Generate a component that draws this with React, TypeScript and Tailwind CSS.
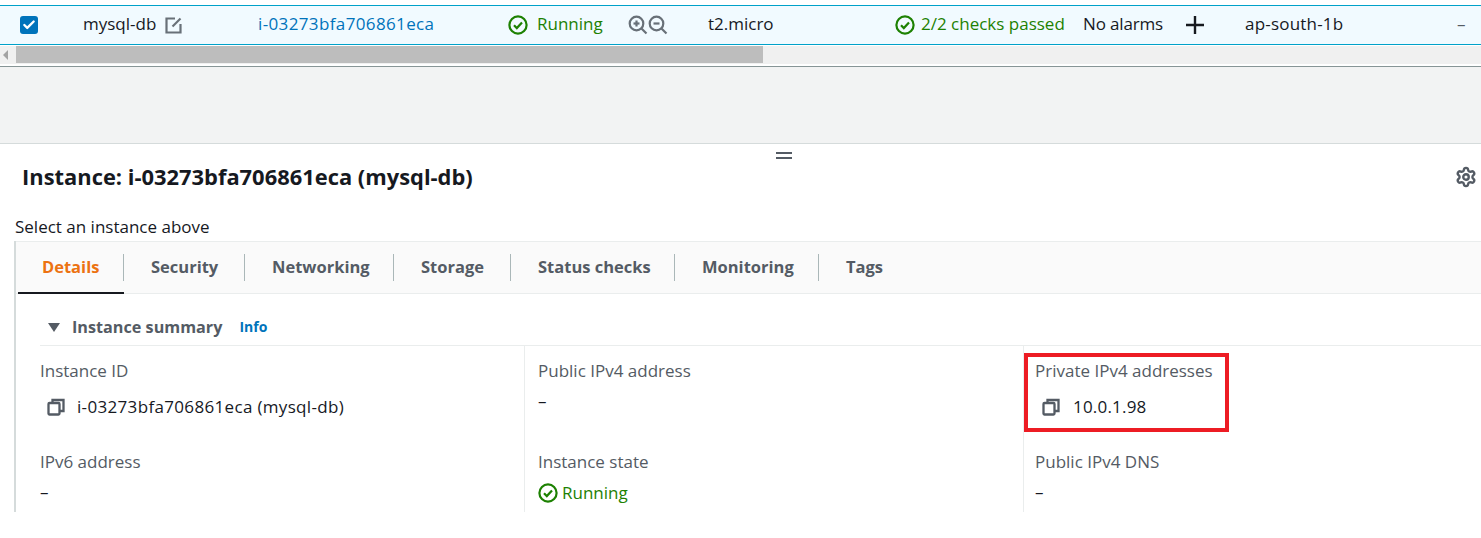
import { Check, Settings } from "lucide-react";

const font = { fontFamily: '"Open Sans", "Liberation Sans", sans-serif' };

function StatusIcon({ size = 20 }: { size?: number }) {
  return (
    <svg width={size} height={size} viewBox="0 0 20 20" fill="none" stroke="#1d8102" strokeWidth="2.2" className="shrink-0">
      <circle cx="10" cy="10" r="8.6" />
      <path d="M6 10.3l2.8 2.8L14 7.4" />
    </svg>
  );
}

function CopyIcon() {
  return (
    <svg width="18" height="18" viewBox="0 0 18 18" fill="none" stroke="#545b64" strokeWidth="2.3" className="shrink-0">
      <rect x="1.5" y="5" width="11" height="11.5" rx="1" />
      <path d="M5.5 5V2h11v11h-4" />
    </svg>
  );
}

function ZoomIcon({ plus }: { plus?: boolean }) {
  return (
    <svg width="20" height="20" viewBox="0 0 20 20" fill="none" stroke="#687078" strokeWidth="2.2">
      <circle cx="8.5" cy="8.5" r="6.8" />
      <path d="M13.5 13.5l5 5" />
      <path d="M5.5 8.5h6" />
      {plus && <path d="M8.5 5.5v6" />}
    </svg>
  );
}

function Tab({ label, width, active, last }: { label: string; width: string; active?: boolean; last?: boolean }) {
  return (
    <div className={`relative flex h-[52px] items-center pb-px ${width} ${active ? "pl-6" : "pl-[27px]"}`}>
      <span className={`whitespace-nowrap text-[16.5px] font-bold ${active ? "text-[#ec7211]" : "text-[#545b64]"}`}>{label}</span>
      {!last && <span className="absolute right-0 top-3 h-[27px] w-px bg-[#aab7b8]" />}
      {active && <span className="absolute bottom-0 left-0 right-0 h-[2px] bg-[#16191f]" />}
    </div>
  );
}

function Label({ children }: { children: string }) {
  return <div className="text-[17px] leading-[22px] text-[#545b64]">{children}</div>;
}

export default function App() {
  return (
    <div style={font} className="h-[538px] w-[1481px] overflow-hidden bg-white text-[17px] text-[#16191f]">
      {/* Selected table row */}
      <div className="mt-[5px] flex h-10 items-center border-y border-[#00a1c9] bg-[#f1faff]">
        <div className="flex w-[83px] pl-5">
          <span className="flex h-[18px] w-[18px] items-center justify-center rounded-[3px] bg-[#0073bb]">
            <Check size={14} strokeWidth={4} className="text-white" />
          </span>
        </div>
        <div className="flex w-[175px] items-center gap-[9px]">
          <span className="pb-[2px]">mysql-db</span>
          <svg width="17" height="17" viewBox="0 0 17 17" fill="none" stroke="#687078" strokeWidth="2.2">
            <path d="M10 1.500H1.500V15.500H15.500V7" />
            <path d="M15.500 1.500L7.500 9.500" />
          </svg>
        </div>
        <div className="w-[250px] pb-[2px] tracking-[0.37px] text-[#0073bb]">i-03273bfa706861eca</div>
        <div className="flex w-[120px] items-center gap-[9px] text-[#1d8102]">
          <StatusIcon />
          <span className="pb-[2px]">Running</span>
        </div>
        <div className="flex w-[80px] items-center">
          <ZoomIcon plus />
          <ZoomIcon />
        </div>
        <div className="w-[187px] pb-[2px]">t2.micro</div>
        <div className="flex w-[188px] items-center gap-[6px] whitespace-nowrap text-[#1d8102]">
          <StatusIcon />
          <span className="pb-[2px]">2/2 checks passed</span>
        </div>
        <div className="w-[103px] whitespace-nowrap pb-[2px] tracking-[-0.15px]">No alarms</div>
        <div className="w-[59px]">
          <svg width="18" height="18" viewBox="0 0 18 18" stroke="#16191f" strokeWidth="2.4">
            <path d="M9 0v18M0 9h18" />
          </svg>
        </div>
        <div className="w-[212px] pb-[2px] tracking-[0.2px]">ap-south-1b</div>
        <div className="pb-[2px] text-[#545b64]">–</div>
      </div>

      {/* Horizontal scrollbar */}
      <div className="mt-px flex h-[18px] bg-[#f0f0f0]">
        <div className="flex w-4 items-center pl-[3px]">
          <span className="h-0 w-0 border-y-[5px] border-r-[5px] border-y-transparent border-r-[#a3a3a3]" />
        </div>
        <div className="h-[17px] w-[747px] bg-[#bdbdbd]" />
      </div>

      {/* Empty table area */}
      <div className="mt-[2px] h-[78px] border-y border-t-[#879596] border-b-[#d5dbdb] bg-[#f2f3f3]" />

      {/* Split panel */}
      <div className="relative">
        <div className="absolute left-[776px] top-[8px] flex flex-col gap-[3px]">
          <span className="h-[2px] w-4 bg-[#545b64]" />
          <span className="h-[2px] w-4 bg-[#545b64]" />
        </div>
        <div className="flex items-center justify-between pl-[22px] pr-[4px] pt-[18px]">
          <h2 className="text-[21.9px] font-bold leading-[30px] text-[#16191f]">Instance: i-03273bfa706861eca (mysql-db)</h2>
          <Settings size={22} strokeWidth={2.6} className="text-[#545b64]" />
        </div>
        <div className="mt-[24px] pl-[15px] leading-[22px] text-[#16191f]">Select an instance above</div>

        {/* Details card */}
        <div className="ml-[14px] mt-[3px] h-[271px] border-l-2 border-[#d5dbdb]">
          <div className="flex h-[53px] border-y border-[#eaeded] bg-[#fafafa] pl-[2px]">
            <Tab label="Details" width="w-[106px]" active />
            <Tab label="Security" width="w-[121px]" />
            <Tab label="Networking" width="w-[149px]" />
            <Tab label="Storage" width="w-[117px]" />
            <Tab label="Status checks" width="w-[164px]" />
            <Tab label="Monitoring" width="w-[144px]" />
            <Tab label="Tags" width="w-[90px]" last />
          </div>
          <div className="pl-6">
            <div className="flex h-[52px] items-center border-b border-[#eaeded] pl-2 pt-4">
              <span className="h-0 w-0 border-x-[6px] border-t-[9px] border-x-transparent border-t-[#545b64]" />
              <span className="ml-3 text-[16.2px] font-bold text-[#545b64]">Instance summary</span>
              <span className="ml-[17px] pb-[2px] text-[14px] font-bold text-[#0073bb]">Info</span>
            </div>
            <div className="grid grid-cols-[484px_499px_1fr]">
              <div className="flex h-[166px] flex-col pt-[14px]">
                <Label>Instance ID</Label>
                <div className="ml-[7px] mt-[12px] flex items-center gap-3 text-[#16191f]">
                  <CopyIcon />
                  <span className="whitespace-nowrap tracking-[0.33px]">i-03273bfa706861eca (mysql-db)</span>
                </div>
                <div className="mt-[31px]"><Label>IPv6 address</Label></div>
                <div className="mt-[8px] leading-[22px] text-[#16191f]">–</div>
              </div>
              <div className="flex h-[166px] flex-col border-l border-[#eaeded] pl-[13px] pt-[14px]">
                <Label>Public IPv4 address</Label>
                <div className="mt-[8px] leading-[22px]">–</div>
                <div className="mt-[39px]"><Label>Instance state</Label></div>
                <div className="mt-[7px] flex items-center gap-[4px] text-[#1d8102]">
                  <StatusIcon />
                  <span>Running</span>
                </div>
              </div>
              <div className="flex h-[166px] flex-col border-l border-[#eaeded] pl-[11px] pt-[14px]">
                <Label>Private IPv4 addresses</Label>
                <div className="ml-[7px] mt-[12px] flex items-center gap-[13px]">
                  <CopyIcon />
                  <span className="tracking-[0.2px]">10.0.1.98</span>
                </div>
                <div className="mt-[31px]"><Label>Public IPv4 DNS</Label></div>
                <div className="mt-[8px] leading-[22px]">–</div>
                {/* highlight box drawn over the screenshot */}
                <div className="absolute left-[1024px] top-[209px] h-[79px] w-[205px] border-4 border-[#ed1c24]" />
              </div>
            </div>
          </div>
        </div>
      </div>
    </div>
  );
}
